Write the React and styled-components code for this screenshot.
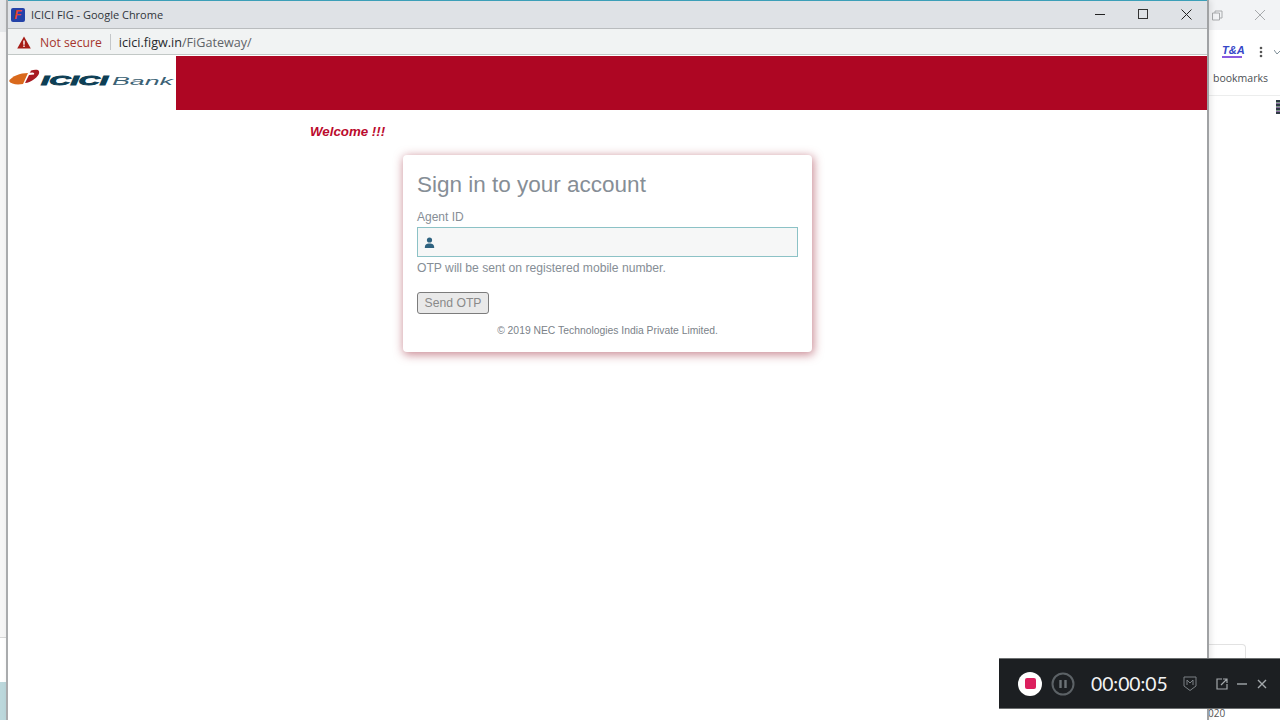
import React from 'react';
import styled, { createGlobalStyle } from 'styled-components';

const GlobalStyle = createGlobalStyle`
  html, body {
    margin: 0;
    padding: 0;
    background: #fff;
    font-family: "Liberation Sans", Arial, sans-serif;
    overflow: hidden;
  }
`;

const Desktop = styled.div`
  position: relative;
  display: flex;
  width: 1280px;
  height: 720px;
  overflow: hidden;
`;

const LeftStrip = styled.div`
  width: 6px;
  display: flex;
  flex-direction: column;
  background: #fff;
`;

const LeftStripTop = styled.div`
  height: 32px;
  background: #e6e8ea;
`;

const LeftStripFill = styled.div`
  flex: 1;
  background: #f6f6f6;
  border-bottom: 1px solid #d8d8d8;
`;

const LeftStripBottom = styled.div`
  height: 38px;
  margin-top: 44px;
  background: #bcd8dc;
`;

const ChromeWindow = styled.div`
  position: relative;
  z-index: 1;
  width: 1203px;
  display: flex;
  flex-direction: column;
  background: #fff;
  border-left: 2px solid #a9abad;
  border-right: 2px solid #a0a2a4;
  box-sizing: border-box;
  box-shadow: 2px 0 6px rgba(0, 0, 0, 0.1);
`;

const TitleBar = styled.div`
  height: 29px;
  flex-shrink: 0;
  box-sizing: border-box;
  display: flex;
  align-items: center;
  padding: 0 15px 0 3px;
  background: #dfe2e6;
  border-top: 1px solid #3c9fb8;
  border-bottom: 1px solid #b9bcbe;
`;

const Favicon = styled.div`
  width: 14px;
  height: 14px;
  margin-right: 6px;
  border-radius: 2px;
  background: #2342a8;
  color: #e8432c;
  font: italic bold 12px/14px "Liberation Sans", sans-serif;
  text-align: center;
`;

const WindowTitle = styled.span`
  flex: 1;
  font: 11px "Open Sans", "Liberation Sans", sans-serif;
  color: #30353a;
`;

const WindowButtons = styled.div`
  display: flex;
  align-items: center;
  gap: 32px;
`;

const AddressBar = styled.div`
  height: 26px;
  flex-shrink: 0;
  box-sizing: border-box;
  display: flex;
  align-items: center;
  padding: 1px 0 0 9px;
  background: #f1f3f3;
  border-bottom: 1px solid #c2c8c6;
`;

const NotSecure = styled.span`
  margin-left: 9px;
  font: 12.2px "Open Sans", "Liberation Sans", sans-serif;
  color: #a5352d;
`;

const Divider = styled.span`
  width: 1px;
  height: 16px;
  margin: 0 8px;
  background: #c4c7c9;
`;

const Url = styled.span`
  font: 12.6px "Open Sans", "Liberation Sans", sans-serif;
  color: #5f6368;
`;

const UrlHost = styled.span`
  color: #26292c;
`;

const Banner = styled.header`
  height: 54px;
  flex-shrink: 0;
  display: flex;
  margin-top: 1px;
`;

const LogoBox = styled.div`
  width: 168px;
  flex-shrink: 0;
  background: #fff;
`;

const RedBand = styled.div`
  flex: 1;
  background: #ae0623;
`;

const Page = styled.main`
  flex: 1;
  display: flex;
  flex-direction: column;
`;

const Welcome = styled.div`
  margin: 14px 0 0 302px;
  font: italic bold 13.3px/16px "Liberation Sans", sans-serif;
  color: #bb0a2d;
`;

const Card = styled.section`
  width: 409px;
  height: 197px;
  box-sizing: border-box;
  margin: 15px 0 0 395px;
  padding: 17px 14px 0;
  background: #fff;
  border-radius: 4px;
  box-shadow: 1px 2px 10px 1px rgba(160, 50, 65, 0.55);
`;

const Heading = styled.h1`
  margin: 0;
  font: 400 22.5px/25px "Liberation Sans", sans-serif;
  color: #868e96;
`;

const FieldLabel = styled.label`
  display: block;
  margin-top: 13px;
  font: 12px/14px "Liberation Sans", sans-serif;
  color: #868e96;
`;

const InputBox = styled.div`
  display: flex;
  align-items: center;
  height: 30px;
  box-sizing: border-box;
  margin-top: 3px;
  padding-left: 6px;
  background: #f6f7f7;
  border: 1px solid #8cc2c6;
`;

const AgentInput = styled.input`
  flex: 1;
  min-width: 0;
  border: 0;
  outline: 0;
  background: transparent;
`;

const HelpText = styled.p`
  margin: 4px 0 0;
  font: 12.15px/14px "Liberation Sans", sans-serif;
  color: #868e96;
`;

const SendButton = styled.button`
  display: block;
  width: 72px;
  height: 22px;
  margin-top: 17px;
  padding: 0;
  background: #e9e9e9;
  border: 1px solid #7c7c7c;
  border-radius: 3px;
  font: 12.2px "Liberation Sans", sans-serif;
  color: #8a8a8a;
`;

const Copyright = styled.p`
  margin: 11px 0 0;
  text-align: center;
  font: 10.35px/12px "Liberation Sans", sans-serif;
  color: #7b8289;
`;

const BackWindow = styled.aside`
  flex: 1;
  display: flex;
  flex-direction: column;
  background: #fff;
  overflow: hidden;
`;

const BackTabs = styled.div`
  height: 30px;
  flex-shrink: 0;
  display: flex;
  align-items: center;
  gap: 31px;
  padding-left: 3px;
  background: #f2f3f5;
`;

const BackToolbar = styled.div`
  height: 35px;
  flex-shrink: 0;
  display: flex;
  align-items: center;
  padding: 8px 0 0 13px;
  box-sizing: border-box;
`;

const Profile = styled.span`
  width: 20px;
  font: italic bold 11px "Liberation Sans", sans-serif;
  color: #3546c8;
  border-bottom: 2px solid #8a5ae0;
  line-height: 11px;
  white-space: nowrap;
`;

const Kebab = styled.svg`
  margin-left: 17px;
`;

const CutOffIcon = styled.svg`
  margin-left: 11px;
`;

const BookmarksBar = styled.div`
  position: relative;
  height: 31px;
  flex-shrink: 0;
  box-sizing: border-box;
  padding: 6px 0 0 4px;
  border-bottom: 1px solid #eceded;
  font: 10.5px "Open Sans", "Liberation Sans", sans-serif;
  color: #4c5054;
  white-space: nowrap;
`;

const ThumbnailEdge = styled.div`
  margin: 4px 0 0 67px;
  width: 5px;
  height: 14px;
  background: repeating-linear-gradient(180deg, #2f3a44 0 2px, #7c9c86 2px 3px, #8a6aa0 3px 4px);
`;

const Recorder = styled.div`
  position: absolute;
  z-index: 2;
  left: 999px;
  top: 658px;
  width: 281px;
  height: 51px;
  display: flex;
  align-items: center;
  padding-left: 19px;
  box-sizing: border-box;
  background: #1c1f22;
  border-top: 1px solid #6d7071;
  border-bottom: 1px solid #6d7071;
`;

const RecordButton = styled.div`
  width: 24px;
  height: 24px;
  display: flex;
  align-items: center;
  justify-content: center;
  border-radius: 50%;
  background: #fff;
`;

const RecordDot = styled.span`
  width: 11px;
  height: 11px;
  border-radius: 2px;
  background: #dc1f5e;
`;

const PauseIcon = styled.svg`
  margin-left: 9px;
`;

const Timer = styled.span`
  margin: 0 15px 0 16px;
  font: 19.3px "Lato", "Open Sans", sans-serif;
  color: #f2f3f3;
`;

const RecorderTools = styled.div`
  display: flex;
  align-items: center;
  margin-left: auto;
  padding-right: 12px;
  gap: 8px;
`;

const BehindRecorder = styled.span`
  position: absolute;
  left: 1208px;
  top: 706px;
  font: 10px "Open Sans", sans-serif;
  color: #555;
`;

const BackCorner = styled.div`
  position: absolute;
  left: 1208px;
  top: 644px;
  width: 38px;
  height: 14px;
  box-sizing: border-box;
  border: 1px solid #e2e2e2;
  border-bottom: 0;
  border-left: 0;
  border-radius: 0 4px 0 0;
`;

const IciciLogo = () => (
  <svg width="168" height="54" viewBox="0 0 168 54">
    <path d="M1 25c3-5 11-8 19-8l-5 11c-7 1-12 0-14-3z" fill="#d9691c" />
    <path d="M20 17c2-3 7-4 10-3 3 2 0 7-5 10-2 1-5 3-8 3l4-8 5-.5c.6-1 0-2-1.500-2z" fill="#a81b22" />
    <circle cx="21" cy="15.500" r="1.500" fill="#fff" />
    <text x="33" y="28.500" textLength="67" lengthAdjust="spacingAndGlyphs" fontFamily="Liberation Sans" fontSize="12" fontWeight="700" fontStyle="italic" fill="#0d3f55" stroke="#0d3f55" strokeWidth="0.8">ICICI</text>
    <text x="104" y="28.500" textLength="61" lengthAdjust="spacingAndGlyphs" fontFamily="Liberation Sans" fontSize="11" fontStyle="italic" fill="#3b6275">Bank</text>
  </svg>
);

const WarningIcon = () => (
  <svg width="14" height="13" viewBox="0 0 14 13">
    <path d="M7 0.5 13.800 12.500H.2z" fill="#a61c16" />
    <path d="M6.300 4.500h1.400v4.200H6.300zM6.300 9.600h1.400v1.400H6.300z" fill="#fff" />
  </svg>
);

const UserIcon = () => (
  <svg width="11" height="11" viewBox="0 0 11 11">
    <circle cx="5.500" cy="3" r="2.600" fill="#2f6380" />
    <path d="M.8 11c0-3.600 1.600-4.600 4.700-4.600s4.700 1 4.700 4.600z" fill="#2f6380" />
  </svg>
);

const App = () => (
  <>
    <GlobalStyle />
    <Desktop>
      <LeftStrip>
        <LeftStripTop />
        <LeftStripFill />
        <LeftStripBottom />
      </LeftStrip>
      <ChromeWindow>
        <TitleBar>
          <Favicon>F</Favicon>
          <WindowTitle>ICICI FIG - Google Chrome</WindowTitle>
          <WindowButtons>
            <svg width="11" height="11" viewBox="0 0 11 11"><path d="M0 5.500h10" stroke="#222" fill="none" /></svg>
            <svg width="11" height="11" viewBox="0 0 11 11"><rect x=".5" y=".5" width="9" height="9" stroke="#333" fill="none" /></svg>
            <svg width="11" height="11" viewBox="0 0 11 11"><path d="M.5.5l10 10M10.500.5l-10 10" stroke="#222" fill="none" /></svg>
          </WindowButtons>
        </TitleBar>
        <AddressBar>
          <WarningIcon />
          <NotSecure>Not secure</NotSecure>
          <Divider />
          <Url><UrlHost>icici.figw.in</UrlHost>/FiGateway/</Url>
        </AddressBar>
        <Banner>
          <LogoBox><IciciLogo /></LogoBox>
          <RedBand />
        </Banner>
        <Page>
          <Welcome>Welcome !!!</Welcome>
          <Card>
            <Heading>Sign in to your account</Heading>
            <FieldLabel htmlFor="agent">Agent ID</FieldLabel>
            <InputBox>
              <UserIcon />
              <AgentInput id="agent" />
            </InputBox>
            <HelpText>OTP will be sent on registered mobile number.</HelpText>
            <SendButton type="button">Send OTP</SendButton>
            <Copyright>© 2019 NEC Technologies India Private Limited.</Copyright>
          </Card>
        </Page>
      </ChromeWindow>
      <BackWindow>
        <BackTabs>
          <svg width="11" height="11" viewBox="0 0 11 11"><path d="M.5 3h7v7h-7zM3 3V1h7v7H8" stroke="#a8aaac" fill="none" /></svg>
          <svg width="12" height="12" viewBox="0 0 12 12"><path d="M1 1l10 10M11 1L1 11" stroke="#a8aaac" fill="none" /></svg>
        </BackTabs>
        <BackToolbar>
          <Profile>T&amp;A</Profile>
          <Kebab width="4" height="12" viewBox="0 0 4 12"><circle cx="2" cy="2" r="1.300" fill="#555" /><circle cx="2" cy="6" r="1.300" fill="#555" /><circle cx="2" cy="10" r="1.300" fill="#555" /></Kebab>
          <CutOffIcon width="6" height="6" viewBox="0 0 6 6"><path d="M0 1l3 4 3-3" stroke="#7f8f98" fill="none" /></CutOffIcon>
        </BackToolbar>
        <BookmarksBar>bookmarks</BookmarksBar>
        <ThumbnailEdge />
      </BackWindow>
      <BackCorner />
      <BehindRecorder>020</BehindRecorder>
      <Recorder>
        <RecordButton><RecordDot /></RecordButton>
        <PauseIcon width="24" height="24" viewBox="0 0 24 24">
          <circle cx="12" cy="12" r="10.500" stroke="#5c6266" strokeWidth="2" fill="none" />
          <path d="M9.500 8v8M14.500 8v8" stroke="#6c7276" strokeWidth="2.400" />
        </PauseIcon>
        <Timer>00:00:05</Timer>
        <svg width="14" height="16" viewBox="0 0 14 16">
          <path d="M1 1h12v9l-6 4.500L1 10z" stroke="#7a8084" fill="none" />
          <path d="M4 9V4l3 3 3-3v5" stroke="#7a8084" fill="none" />
        </svg>
        <RecorderTools>
          <svg width="12" height="12" viewBox="0 0 12 12">
            <path d="M6 1H1v10h10V6M7 1h4v4M11 1L5 7" stroke="#a3a8ab" strokeWidth="1.200" fill="none" />
          </svg>
          <svg width="12" height="12" viewBox="0 0 12 12"><path d="M1 6h10" stroke="#a3a8ab" strokeWidth="1.400" /></svg>
          <svg width="12" height="12" viewBox="0 0 12 12"><path d="M2 2l8 8M10 2l-8 8" stroke="#a3a8ab" strokeWidth="1.400" /></svg>
        </RecorderTools>
      </Recorder>
    </Desktop>
  </>
);

export default App;
